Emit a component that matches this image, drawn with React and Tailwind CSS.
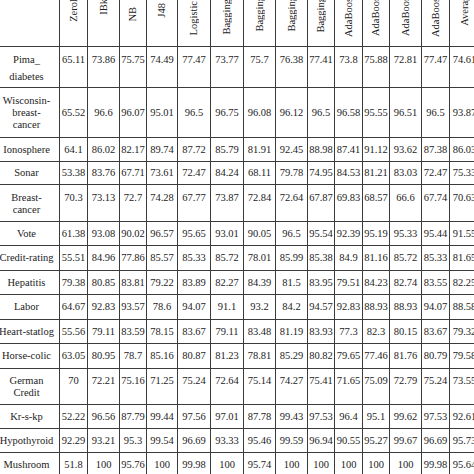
import React from "react";

const colW = [
  "w-[28px]", "w-[32px]", "w-[27px]", "w-[31px]", "w-[33px]", "w-[33px]", "w-[32px]",
  "w-[32px]", "w-[27px]", "w-[28px]", "w-[27px]", "w-[32px]", "w-[28px]", "w-[30px]",
];

// header labels, bottom padding decides where the rotated text starts
const headers = [
  ["ZeroR", "pb-[24px]"],
  ["IBk", "pb-[31px]"],
  ["NB", "pb-[24px]"],
  ["J48", "pb-[28px]"],
  ["Logistic", "pb-[11px]"],
  ["Bagging", "pb-[11px]"],
  ["Bagging", "pb-[14px]"],
  ["Bagging", "pb-[14px]"],
  ["Bagging", "pb-[13px]"],
  ["AdaBoost", "pb-[9px]"],
  ["AdaBoost", "pb-[10px]"],
  ["AdaBoost", "pb-[10px]"],
  ["AdaBoost", "pb-[9px]"],
  ["Average", "pb-[20px]"],
];

const rows = [
  { name: ["Pima_", "diabetes"], h: "h-[41px]", top: "pt-[7px]", gap: "mt-[5px]",
    v: ["65.11", "73.86", "75.75", "74.49", "77.47", "73.77", "75.7", "76.38", "77.41", "73.8", "75.88", "72.81", "77.47", "74.61"] },
  { name: ["Wisconsin-", "breast-", "cancer"], h: "h-[50px]", center: true,
    v: ["65.52", "96.6", "96.07", "95.01", "96.5", "96.75", "96.08", "96.12", "96.5", "96.58", "95.55", "96.51", "96.5", "93.87"] },
  { name: ["Ionosphere"], h: "h-[24px]", center: true,
    v: ["64.1", "86.02", "82.17", "89.74", "87.72", "85.79", "81.91", "92.45", "88.98", "87.41", "91.12", "93.62", "87.38", "86.03"] },
  { name: ["Sonar"], h: "h-[23px]", center: true,
    v: ["53.38", "83.76", "67.71", "73.61", "72.47", "84.24", "68.11", "79.78", "74.95", "84.53", "81.21", "83.03", "72.47", "75.33"] },
  { name: ["Breast-", "cancer"], h: "h-[37px]", top: "pt-[7px]",
    v: ["70.3", "73.13", "72.7", "74.28", "67.77", "73.87", "72.84", "72.64", "67.87", "69.83", "68.57", "66.6", "67.74", "70.63"] },
  { name: ["Vote"], h: "h-[24px]", center: true,
    v: ["61.38", "93.08", "90.02", "96.57", "95.65", "93.01", "90.05", "96.5", "95.54", "92.39", "95.19", "95.33", "95.44", "91.55"] },
  { name: ["Credit-rating"], h: "h-[25px]", center: true,
    v: ["55.51", "84.96", "77.86", "85.57", "85.33", "85.72", "78.01", "85.99", "85.38", "84.9", "81.16", "85.72", "85.33", "81.65"] },
  { name: ["Hepatitis"], h: "h-[24px]", center: true,
    v: ["79.38", "80.85", "83.81", "79.22", "83.89", "82.27", "84.39", "81.5", "83.95", "79.51", "84.23", "82.74", "83.55", "82.25"] },
  { name: ["Labor"], h: "h-[25px]", center: true,
    v: ["64.67", "92.83", "93.57", "78.6", "94.07", "91.1", "93.2", "84.2", "94.57", "92.83", "88.93", "88.93", "94.07", "88.58"] },
  { name: ["Heart-statlog"], h: "h-[24px]", center: true,
    v: ["55.56", "79.11", "83.59", "78.15", "83.67", "79.11", "83.48", "81.19", "83.93", "77.3", "82.3", "80.15", "83.67", "79.32"] },
  { name: ["Horse-colic"], h: "h-[25px]", center: true,
    v: ["63.05", "80.95", "78.7", "85.16", "80.87", "81.23", "78.81", "85.29", "80.82", "79.65", "77.46", "81.76", "80.79", "79.58"] },
  { name: ["German", "Credit"], h: "h-[36px]", top: "pt-[6px]",
    v: ["70", "72.21", "75.16", "71.25", "75.24", "72.64", "75.14", "74.27", "75.41", "71.65", "75.09", "72.79", "75.24", "73.55"] },
  { name: ["Kr-s-kp"], h: "h-[24px]", center: true,
    v: ["52.22", "96.56", "87.79", "99.44", "97.56", "97.01", "87.78", "99.43", "97.53", "96.4", "95.1", "99.62", "97.53", "92.61"] },
  { name: ["Hypothyroid"], h: "h-[24px]", center: true,
    v: ["92.29", "93.21", "95.3", "99.54", "96.69", "93.33", "95.46", "99.59", "96.94", "90.55", "95.27", "99.67", "96.69", "95.73"] },
  { name: ["Mushroom"], h: "h-[24px]", center: true,
    v: ["51.8", "100", "95.76", "100", "99.98", "100", "95.74", "100", "100", "100", "100", "100", "99.98", "95.64"] },
];

const line = "border-r border-b border-[#3b3b3b]";

const Row = ({ row }) => {
  const align = row.center ? "justify-center" : `justify-start ${row.top}`;
  return (
    <div className="flex">
      {/* dataset name */}
      <div className={`w-[66px] shrink-0 ${row.h} ${line} flex flex-col items-center ${align} whitespace-nowrap`}>
        {row.name.map((n, i) => (
          <div key={i} className={i === 1 && row.gap ? row.gap : ""}>
            {n}
          </div>
        ))}
      </div>

      {/* accuracies */}
      {row.v.map((val, i) => (
        <div
          key={i}
          className={`${colW[i]} shrink-0 ${row.h} ${line} flex flex-col items-center ${align} whitespace-nowrap`}
        >
          {val}
        </div>
      ))}
    </div>
  );
};

export default function App() {
  return (
    <div className="w-[474px] h-[474px] overflow-hidden bg-white text-[#1c1c1c] text-[10.5px] leading-[12px] font-['Liberation_Serif',serif]">
      <div className="ml-[-6px] w-[500px]">
        {/* Header */}
        <div className="flex">
          <div className={`w-[66px] shrink-0 h-[47px] ${line}`} />
          {headers.map(([label, pb], i) => (
            <div
              key={i}
              className={`${colW[i]} shrink-0 h-[47px] ${line} ${pb} flex items-end justify-center overflow-hidden`}
            >
              <span className="[writing-mode:vertical-rl] rotate-180 whitespace-nowrap">
                {label}
              </span>
            </div>
          ))}
        </div>

        {rows.map((row, i) => (
          <Row key={i} row={row} />
        ))}
      </div>
    </div>
  );
}
